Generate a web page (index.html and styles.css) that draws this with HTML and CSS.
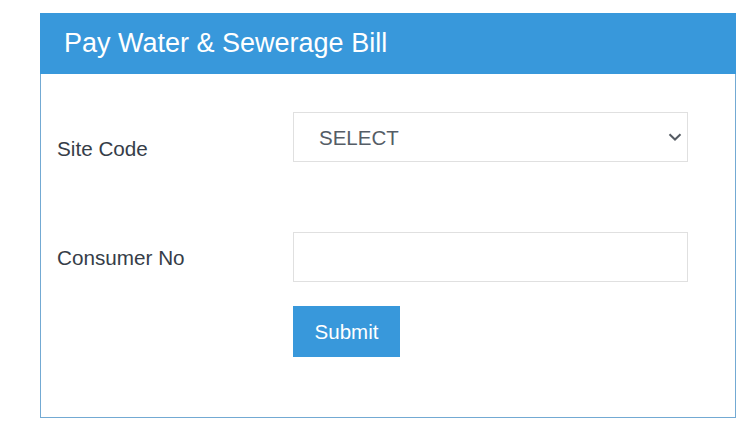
FILE: index.html
```html
<!DOCTYPE html>
<html lang="en">
<head>
    <meta charset="UTF-8">
    <meta name="viewport" content="width=device-width, initial-scale=1.0">
    <title>Pay Water &amp; Sewerage Bill</title>
    <link rel="stylesheet" href="styles.css">
</head>
<body>
    <div class="panel">
        <div class="panel-heading">Pay Water &amp; Sewerage Bill</div>

        <form class="panel-body">
            <!-- Site code -->
            <div class="form-row">
                <label class="form-label form-label-low" for="site-code">Site Code</label>
                <div class="select-wrap">
                    <select id="site-code" class="form-control">
                        <option>SELECT</option>
                    </select>
                    <svg class="select-arrow" width="14" height="8" viewBox="0 0 14 8">
                        <path d="M1.5 1.2l5.5 5.3 5.5-5.3" fill="none" stroke="#555b63" stroke-width="2"/>
                    </svg>
                </div>
            </div>

            <!-- Consumer no -->
            <div class="form-row form-row-gap">
                <label class="form-label" for="consumer-no">Consumer No</label>
                <input id="consumer-no" class="form-control" type="text">
            </div>

            <div class="form-actions">
                <button type="submit" class="btn-submit">Submit</button>
            </div>
        </form>
    </div>
</body>
</html>
```

FILE: styles.css
```css
/* General */
body {
    font-family: "Liberation Sans", Arial, sans-serif;
    margin: 0;
    padding: 0;
    background-color: #fff;
}

/* Panel */
.panel {
    width: 696px;
    margin: 13px 0 0 40px;
    box-sizing: border-box;
    border: 1px solid #73aad3;
}
.panel-heading {
    margin: -1px -1px 0;
    height: 61px;
    padding-left: 24px;
    line-height: 61px;
    font-size: 27px;
    color: #fff;
    background-color: #3898db;
}
.panel-body {
    margin: 0;
    padding: 38px 0 60px 16px;
}

/* Form */
.form-row {
    display: flex;
    align-items: flex-start;
}
.form-row-gap {
    margin-top: 70px;
}
.form-label {
    width: 236px;
    padding-top: 14px;
    font-size: 20.7px;
    line-height: 24px;
    color: #363d48;
}
.form-label-low {
    padding-top: 25px;
}
.select-wrap {
    position: relative;
}
.form-control {
    display: block;
    width: 395px;
    height: 50px;
    margin: 0;
    box-sizing: border-box;
    border: 1px solid #e0e0e0;
    border-radius: 0;
    background-color: #fff;
    font-family: inherit;
    font-size: 20.5px;
    color: #555d66;
    outline: none;
}
select.form-control {
    padding: 0 0 0 25px;
    appearance: none;
    -webkit-appearance: none;
}
input.form-control {
    padding: 0 12px;
}
.select-arrow {
    position: absolute;
    top: 21px;
    right: 6px;
    pointer-events: none;
}
.form-actions {
    margin-top: 24px;
    padding-left: 236px;
}
.btn-submit {
    display: block;
    width: 107px;
    height: 51px;
    border: none;
    border-radius: 0;
    padding: 0;
    background-color: #3898db;
    color: #fff;
    font-family: inherit;
    font-size: 20.5px;
    cursor: pointer;
}
.btn-submit:hover {
    background-color: #2d88c8;
}
```
